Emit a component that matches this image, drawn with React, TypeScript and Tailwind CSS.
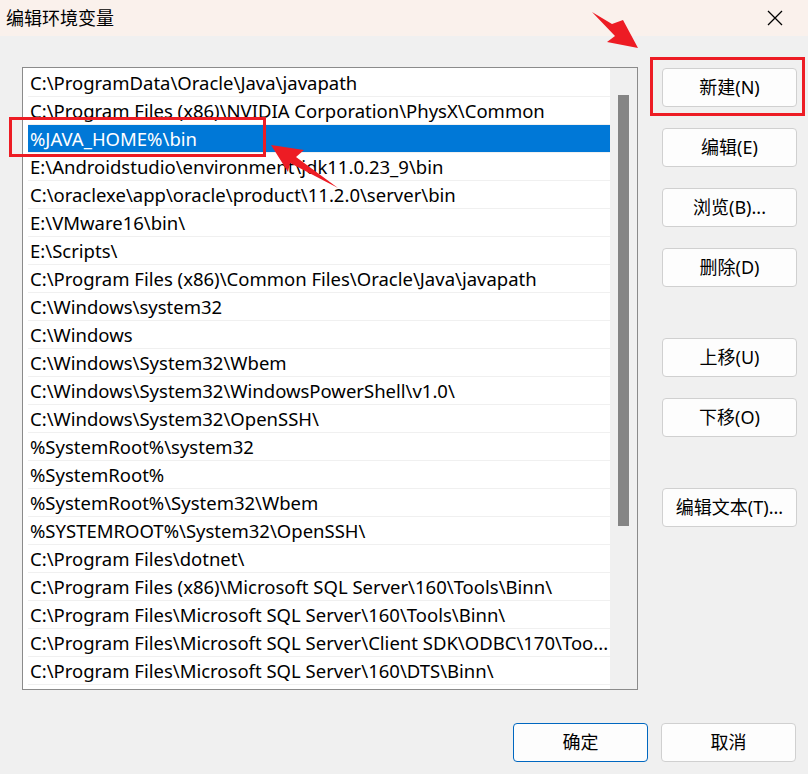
const rows = [
  "C:\\ProgramData\\Oracle\\Java\\javapath",
  "C:\\Program Files (x86)\\NVIDIA Corporation\\PhysX\\Common",
  "%JAVA_HOME%\\bin",
  "E:\\Androidstudio\\environment\\jdk11.0.23_9\\bin",
  "C:\\oraclexe\\app\\oracle\\product\\11.2.0\\server\\bin",
  "E:\\VMware16\\bin\\",
  "E:\\Scripts\\",
  "C:\\Program Files (x86)\\Common Files\\Oracle\\Java\\javapath",
  "C:\\Windows\\system32",
  "C:\\Windows",
  "C:\\Windows\\System32\\Wbem",
  "C:\\Windows\\System32\\WindowsPowerShell\\v1.0\\",
  "C:\\Windows\\System32\\OpenSSH\\",
  "%SystemRoot%\\system32",
  "%SystemRoot%",
  "%SystemRoot%\\System32\\Wbem",
  "%SYSTEMROOT%\\System32\\OpenSSH\\",
  "C:\\Program Files\\dotnet\\",
  "C:\\Program Files (x86)\\Microsoft SQL Server\\160\\Tools\\Binn\\",
  "C:\\Program Files\\Microsoft SQL Server\\160\\Tools\\Binn\\",
  "C:\\Program Files\\Microsoft SQL Server\\Client SDK\\ODBC\\170\\Too...",
  "C:\\Program Files\\Microsoft SQL Server\\160\\DTS\\Binn\\",
  "",
];

const WinButton = ({ label, primary = false }: { label: string; primary?: boolean }) => (
  <button
    className={`w-[135px] h-[39px] rounded-[4px] border bg-[#fdfdfd] text-[18px] text-black ${
      primary ? "border-[#0067c0]" : "border-[#d0d0d0]"
    }`}
  >
    {label}
  </button>
);

export default function App() {
  return (
    <div
      className="relative w-[808px] h-[774px] overflow-hidden bg-[#f0f0f0] text-black"
      style={{ fontFamily: '"Noto Sans", "Noto Sans CJK SC", sans-serif' }}
    >
      {/* title bar */}
      <div className="h-[36px] bg-[#faf1ec] flex items-center justify-between pl-[6px] pr-[25px]">
        <span className="text-[18px] leading-none">编辑环境变量</span>
        <svg width="16" height="16" viewBox="0 0 16 16" className="text-black">
          <path d="M1 1 L15 15 M15 1 L1 15" stroke="currentColor" strokeWidth="1.3" fill="none" />
        </svg>
      </div>

      <div className="flex pt-[31px]">
        {/* list box */}
        <div className="ml-[22px] w-[616px] h-[623px] border border-[#8b8b8b] bg-white flex overflow-hidden">
          <div className="flex-1 pl-[5px] pt-[1px] overflow-hidden">
            {rows.map((r, i) => (
              <div
                key={i}
                className={`h-[28px] w-[582px] flex items-center pl-[2px] border-b border-[#f0f0f0] text-[18.5px] whitespace-nowrap ${
                  i === 2 ? "bg-[#0078d7] text-white" : ""
                }`}
              >
                {r}
              </div>
            ))}
          </div>
          <div className="w-[27px] bg-[#f0f0f0] pt-[27px] pl-[8px]">
            <div className="w-[11px] h-[431px] bg-[#858585]" />
          </div>
        </div>

        {/* side buttons */}
        <div className="ml-[24px] pt-[1px] flex flex-col">
          <div className="flex flex-col gap-[21px]">
            <WinButton label="新建(N)" />
            <WinButton label="编辑(E)" />
            <WinButton label="浏览(B)..." />
            <WinButton label="删除(D)" />
          </div>
          <div className="mt-[51px] flex flex-col gap-[21px]">
            <WinButton label="上移(U)" />
            <WinButton label="下移(O)" />
          </div>
          <div className="mt-[51px]">
            <WinButton label="编辑文本(T)..." />
          </div>
        </div>
      </div>

      {/* bottom buttons */}
      <div className="flex justify-end gap-[13px] pr-[12px] mt-[33px]">
        <WinButton label="确定" primary />
        <WinButton label="取消" />
      </div>

      {/* annotations */}
      <div className="absolute left-[650px] top-[57px] w-[155px] h-[59px] border-[3px] border-[#ed1c24]" />
      <div className="absolute left-[9px] top-[117px] w-[257px] h-[40px] border-[3px] border-[#ed1c24]" />
      <svg className="absolute left-0 top-0" width="808" height="774" viewBox="0 0 808 774">
        <polygon
          points="271,145 304,150 296,157 338,188 290,163 288,172"
          fill="#ed1c24"
        />
        <polygon
          points="592,12 612,24 623,20 638,48 607,42 615,36"
          fill="#ed1c24"
        />
      </svg>
    </div>
  );
}
